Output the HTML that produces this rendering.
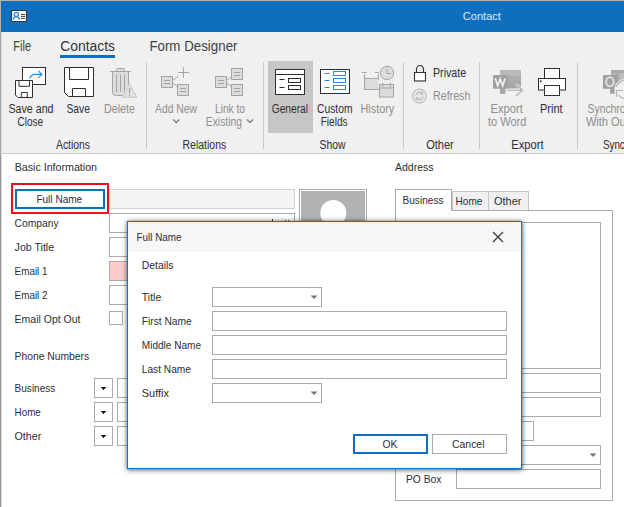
<!DOCTYPE html>
<html lang="en"><head><meta charset="utf-8"><title>Contact</title>
<style>
html,body{margin:0;padding:0;background:#fff;overflow:hidden}
body{width:624px;height:507px;font-family:"Liberation Sans",sans-serif}
svg{display:block;position:absolute;left:0;top:0}
text{font-family:"Liberation Sans",sans-serif;white-space:pre}
</style></head><body>
<svg width="624" height="507" viewBox="0 0 624 507">
<defs>
<filter id="sh" x="-10%" y="-10%" width="120%" height="125%"><feDropShadow dx="0.2" dy="0.4" stdDeviation="2.3" flood-color="#000" flood-opacity="0.6"/></filter>
<filter id="sh2" x="-10%" y="-10%" width="120%" height="125%"><feDropShadow dx="0" dy="1.5" stdDeviation="3" flood-color="#000" flood-opacity="0.2"/></filter>
</defs>
<rect x="0" y="0" width="624" height="507" fill="#fff" />
<rect x="0" y="0" width="624" height="32" fill="#106ebe" />
<rect x="0" y="0" width="624" height="1" fill="#b9b2a6" />
<rect x="0" y="32" width="624" height="121" fill="#f0f0f0" />
<rect x="0" y="153" width="624" height="1" fill="#c9c9c9" />
<rect x="0" y="0" width="1" height="32" fill="#b9b2a6" />
<rect x="0" y="32" width="1" height="122" fill="#a6a6a6" />
<rect x="1" y="32" width="1" height="122" fill="#dedede" />
<rect x="0" y="154" width="1" height="353" fill="#979797" />
<rect x="1" y="154" width="1" height="353" fill="#d9d9d9" />
<rect x="11.5" y="10.5" width="15" height="11" rx="0.8" fill="#fff" stroke="#3a3a3a" stroke-width="1.2"/>
<circle cx="16.3" cy="14.4" r="2.1" fill="none" stroke="#2b8ade" stroke-width="1.3"/>
<path d="M13.4 19.8 a2.95 3.1 0 0 1 5.9 0" fill="none" stroke="#2b8ade" stroke-width="1.3"/>
<line x1="21" y1="14.4" x2="25" y2="14.4" stroke="#3a3a3a" stroke-width="1" />
<line x1="21" y1="16.4" x2="25" y2="16.4" stroke="#3a3a3a" stroke-width="1" />
<line x1="21" y1="18.4" x2="25" y2="18.4" stroke="#3a3a3a" stroke-width="1" />
<text x="462.8" y="20" font-size="11" fill="#dce9f7" textLength="38.1" lengthAdjust="spacingAndGlyphs" >Contact</text>
<text x="13.3" y="51" font-size="14" fill="#404040" textLength="17.7" lengthAdjust="spacingAndGlyphs" >File</text>
<text x="60.3" y="51" font-size="14" fill="#333" textLength="54.7" lengthAdjust="spacingAndGlyphs" >Contacts</text>
<rect x="60" y="55" width="55" height="3" fill="#106ebe" />
<text x="149.4" y="51" font-size="14" fill="#404040" textLength="88.1" lengthAdjust="spacingAndGlyphs" >Form Designer</text>
<rect x="146" y="62" width="1" height="87" fill="#c8c8c8" />
<rect x="263" y="62" width="1" height="87" fill="#c8c8c8" />
<rect x="403" y="62" width="1" height="87" fill="#c8c8c8" />
<rect x="479" y="62" width="1" height="87" fill="#c8c8c8" />
<rect x="577" y="62" width="1" height="87" fill="#c8c8c8" />
<rect x="268" y="61" width="45" height="72" fill="#c6c6c6" />
<text x="8.5" y="113" font-size="12" fill="#2e2e33" textLength="45.0" lengthAdjust="spacingAndGlyphs" >Save and</text>
<text x="17.5" y="126" font-size="12" fill="#2e2e33" textLength="25.5" lengthAdjust="spacingAndGlyphs" >Close</text>
<text x="66.5" y="113" font-size="12" fill="#2e2e33" textLength="23.5" lengthAdjust="spacingAndGlyphs" >Save</text>
<text x="104" y="113" font-size="12" fill="#8e8e8e" textLength="31" lengthAdjust="spacingAndGlyphs" >Delete</text>
<text x="56" y="148.7" font-size="12" fill="#2e2e33" textLength="34" lengthAdjust="spacingAndGlyphs" >Actions</text>
<text x="155" y="113" font-size="12" fill="#8e8e8e" textLength="42" lengthAdjust="spacingAndGlyphs" >Add New</text>
<text x="215" y="113" font-size="12" fill="#8e8e8e" textLength="30" lengthAdjust="spacingAndGlyphs" >Link to</text>
<text x="205.75" y="126" font-size="12" fill="#8e8e8e" textLength="36.25" lengthAdjust="spacingAndGlyphs" >Existing</text>
<text x="182.5" y="148.7" font-size="12" fill="#2e2e33" textLength="43.75" lengthAdjust="spacingAndGlyphs" >Relations</text>
<text x="271.75" y="113" font-size="12" fill="#2e2e33" textLength="36.25" lengthAdjust="spacingAndGlyphs" >General</text>
<text x="317" y="113" font-size="12" fill="#2e2e33" textLength="35.5" lengthAdjust="spacingAndGlyphs" >Custom</text>
<text x="320.75" y="126" font-size="12" fill="#2e2e33" textLength="26.75" lengthAdjust="spacingAndGlyphs" >Fields</text>
<text x="360.5" y="113" font-size="12" fill="#8e8e8e" textLength="33.75" lengthAdjust="spacingAndGlyphs" >History</text>
<text x="319.5" y="148.7" font-size="12" fill="#2e2e33" textLength="26.0" lengthAdjust="spacingAndGlyphs" >Show</text>
<text x="433" y="77" font-size="12" fill="#2e2e33" textLength="33.2" lengthAdjust="spacingAndGlyphs" >Private</text>
<text x="433" y="100" font-size="12" fill="#8e8e8e" textLength="37.4" lengthAdjust="spacingAndGlyphs" >Refresh</text>
<text x="426.2" y="148.7" font-size="12" fill="#2e2e33" textLength="27.6" lengthAdjust="spacingAndGlyphs" >Other</text>
<text x="490.5" y="113" font-size="12" fill="#8e8e8e" textLength="32.3" lengthAdjust="spacingAndGlyphs" >Export</text>
<text x="488" y="126" font-size="12" fill="#8e8e8e" textLength="38.3" lengthAdjust="spacingAndGlyphs" >to Word</text>
<text x="540" y="113" font-size="12" fill="#2e2e33" textLength="22.6" lengthAdjust="spacingAndGlyphs" >Print</text>
<text x="511.3" y="148.7" font-size="12" fill="#2e2e33" textLength="32.3" lengthAdjust="spacingAndGlyphs" >Export</text>
<text x="587.6" y="113" font-size="12" fill="#8e8e8e" textLength="56.9" lengthAdjust="spacingAndGlyphs" >Synchronize</text>
<text x="585.9" y="126" font-size="12" fill="#8e8e8e" textLength="63.1" lengthAdjust="spacingAndGlyphs" >With Outlook</text>
<text x="602.9" y="148.7" font-size="12" fill="#2e2e33" textLength="70.1" lengthAdjust="spacingAndGlyphs" >Synchronization</text>
<path d="M173.3 119.6 l3 3 l3 -3" fill="none" stroke="#808080" stroke-width="1.4"/>
<path d="M247 119.4 l3 3 l3 -3" fill="none" stroke="#808080" stroke-width="1.4"/>
<rect x="22.5" y="67.5" width="23" height="17" fill="#fff" stroke="#2f2f2f"/>
<path d="M29.8 78.6 C30.6 75.6 32.4 74.4 35 74.4 L42 74.4 M38.4 71 L42 74.4 L38.4 77.8" fill="none" stroke="#2b8ade" stroke-width="1.1"/>
<path d="M15.5 80.5 H32.5 V97.5 H18 L15.5 95 Z" fill="#fff" stroke="#2f2f2f"/>
<path d="M19 80.5 V86.3 H29.5 V80.5 M21.3 97.5 V92.5 H27.3 V97.5" fill="none" stroke="#2f2f2f"/>
<path d="M64.5 67.5 H93.5 V96.5 H68.5 L64.5 92.5 Z" fill="#fff" stroke="#2f2f2f"/>
<path d="M69.5 67.5 V79.5 H88.5 V67.5 M72.5 96.5 V88.5 H85.5 V96.5" fill="none" stroke="#2f2f2f"/>
<path d="M112.5 71.5 H128.5 V92.5 a3 3 0 0 1 -3 3 H115.5 a3 3 0 0 1 -3 -3 Z" fill="#dcdcdc" stroke="#a4a4a4"/>
<line x1="110" y1="71.5" x2="131" y2="71.5" stroke="#a4a4a4" stroke-width="1" />
<path d="M116.5 71 V69.5 a1 1 0 0 1 1 -1 H123.5 a1 1 0 0 1 1 1 V71" fill="#dcdcdc" stroke="#a4a4a4"/>
<line x1="116.5" y1="74.5" x2="116.5" y2="92" stroke="#a4a4a4" stroke-width="1" />
<line x1="120.5" y1="74.5" x2="120.5" y2="92" stroke="#a4a4a4" stroke-width="1" />
<line x1="124.5" y1="74.5" x2="124.5" y2="92" stroke="#a4a4a4" stroke-width="1" />
<path d="M129.7 82.2 L137.8 98 H121.4 Z" fill="#ececec"/>
<path d="M129.7 83.6 L136.8 97.3 H122.5 Z" fill="#e2e2e2" stroke="#c2c2c2" stroke-width="0.8"/>
<line x1="129.6" y1="88" x2="129.6" y2="93.5" stroke="#9c9c9c" stroke-width="1.1" />
<line x1="129.6" y1="94.6" x2="129.6" y2="96.2" stroke="#9c9c9c" stroke-width="1.1" />
<rect x="161.5" y="76.5" width="11" height="11" fill="#dcdcdc" stroke="#a4a4a4"/>
<line x1="164" y1="80.5" x2="170" y2="80.5" stroke="#a4a4a4" stroke-width="1" />
<line x1="164" y1="83.5" x2="170" y2="83.5" stroke="#a4a4a4" stroke-width="1" />
<rect x="177.5" y="84.5" width="11" height="11" fill="#dcdcdc" stroke="#a4a4a4"/>
<line x1="180" y1="88.5" x2="186" y2="88.5" stroke="#a4a4a4" stroke-width="1" />
<line x1="180" y1="91.5" x2="186" y2="91.5" stroke="#a4a4a4" stroke-width="1" />
<line x1="172.5" y1="80.6" x2="178" y2="76.4" stroke="#a4a4a4" stroke-width="1" />
<line x1="172.5" y1="82.6" x2="177.5" y2="86.8" stroke="#a4a4a4" stroke-width="1" />
<line x1="183.4" y1="67.3" x2="183.4" y2="78" stroke="#a4a4a4" stroke-width="1" />
<line x1="178" y1="72.5" x2="189" y2="72.5" stroke="#a4a4a4" stroke-width="1" />
<rect x="215.5" y="76.5" width="11" height="11" fill="#dcdcdc" stroke="#a4a4a4"/>
<line x1="218" y1="80.5" x2="224" y2="80.5" stroke="#a4a4a4" stroke-width="1" />
<line x1="218" y1="83.5" x2="224" y2="83.5" stroke="#a4a4a4" stroke-width="1" />
<rect x="231.5" y="68.5" width="11" height="11" fill="#dcdcdc" stroke="#a4a4a4"/>
<line x1="234" y1="72.5" x2="240" y2="72.5" stroke="#a4a4a4" stroke-width="1" />
<line x1="234" y1="75.5" x2="240" y2="75.5" stroke="#a4a4a4" stroke-width="1" />
<rect x="231.5" y="84.5" width="11" height="11" fill="#dcdcdc" stroke="#a4a4a4"/>
<line x1="234" y1="88.5" x2="240" y2="88.5" stroke="#a4a4a4" stroke-width="1" />
<line x1="234" y1="91.5" x2="240" y2="91.5" stroke="#a4a4a4" stroke-width="1" />
<line x1="226.5" y1="80.6" x2="231.5" y2="76.6" stroke="#a4a4a4" stroke-width="1" />
<line x1="226.5" y1="82.8" x2="231.5" y2="87" stroke="#a4a4a4" stroke-width="1" />
<rect x="275.5" y="69.5" width="29" height="25" fill="#fff" stroke="#2f2f2f"/>
<line x1="275.5" y1="74.5" x2="304.5" y2="74.5" stroke="#2f2f2f" stroke-width="1" />
<line x1="279.5" y1="79.5" x2="284.5" y2="79.5" stroke="#2f2f2f" stroke-width="1" />
<line x1="279.5" y1="87.5" x2="284.5" y2="87.5" stroke="#2f2f2f" stroke-width="1" />
<rect x="288.5" y="78.5" width="12" height="4" fill="#fff" stroke="#2f2f2f"/>
<rect x="288.5" y="85.5" width="12" height="4" fill="#fff" stroke="#2f2f2f"/>
<rect x="320.5" y="69.5" width="29" height="24" fill="#fff" stroke="#2f2f2f"/>
<line x1="324.5" y1="73.5" x2="329.5" y2="73.5" stroke="#2b8ade" stroke-width="1" />
<line x1="324.5" y1="80.5" x2="329.5" y2="80.5" stroke="#2b8ade" stroke-width="1" />
<line x1="324.5" y1="87.5" x2="329.5" y2="87.5" stroke="#2b8ade" stroke-width="1" />
<rect x="333.5" y="71.5" width="12" height="4" fill="#fff" stroke="#2b8ade"/>
<rect x="333.5" y="78.5" width="12" height="4" fill="#fff" stroke="#2b8ade"/>
<rect x="333.5" y="85.5" width="12" height="4" fill="#fff" stroke="#2b8ade"/>
<path d="M364.5 78.5 H378.5 V89.5 H364.5 Z" fill="#dcdcdc" stroke="none"/>
<path d="M364.5 74 V89.5 H379 M364.5 78.5 H378 M378.5 74 V80" fill="none" stroke="#a4a4a4"/>
<line x1="362" y1="72.5" x2="366.5" y2="72.5" stroke="#a4a4a4" stroke-width="1" />
<line x1="375" y1="72.5" x2="379" y2="72.5" stroke="#a4a4a4" stroke-width="1" />
<circle cx="387" cy="73" r="6.7" fill="#dcdcdc" stroke="#a4a4a4"/>
<path d="M387 68.5 V73.5 H391" fill="none" stroke="#a4a4a4"/>
<rect x="379.5" y="84.5" width="14" height="12.5" fill="#dcdcdc" stroke="#a4a4a4"/>
<line x1="379.5" y1="88" x2="393.5" y2="88" stroke="#a4a4a4" stroke-width="1" />
<line x1="382.8" y1="82.5" x2="382.8" y2="87" stroke="#a4a4a4" stroke-width="1" />
<line x1="390.4" y1="82.5" x2="390.4" y2="87" stroke="#a4a4a4" stroke-width="1" />
<path d="M416.5 72.5 V69.5 a3.5 4 0 0 1 7 0 V72.5" fill="none" stroke="#2f2f2f" stroke-width="1.1"/>
<rect x="414.5" y="72.5" width="11" height="8.5" fill="#fff" stroke="#2f2f2f" stroke-width="1.1"/>
<circle cx="419.4" cy="96" r="7" fill="#e4e4e4" stroke="#b4b4b4"/>
<path d="M415.8 95.3 a3.7 3.7 0 0 1 6.6 -1.6 M423 96.7 a3.7 3.7 0 0 1 -6.6 1.6" fill="none" stroke="#b0b0b0"/>
<path d="M422.6 91.5 V94 H420.2 M416.2 100.5 V98 H418.6" fill="none" stroke="#b0b0b0"/>
<rect x="500" y="70" width="21" height="6" fill="#b9b9b9"/>
<rect x="500" y="76" width="21" height="6" fill="#adadad"/>
<rect x="500" y="82" width="21" height="6.5" fill="#a7a7a7"/>
<rect x="500" y="88" width="5.4" height="5.8" fill="#a4a4a4"/>
<rect x="493" y="75" width="14.5" height="13.8" rx="0.8" fill="#a0a0a0"/>
<path d="M495.3 78.2 L497.7 85.8 L500.2 79 L502.7 85.8 L505.1 78.2" fill="none" stroke="#efefef" stroke-width="1.7"/>
<path d="M516 83.7 L522.3 90.3" fill="none" stroke="#e6e6e6" stroke-width="2.6"/>
<path d="M507 90.3 H522 M516 83.7 L522.3 90.3 L516 96" fill="none" stroke="#a8a8a8" stroke-width="1.1"/>
<rect x="544.5" y="68.5" width="15" height="10.5" fill="#fff" stroke="#2f2f2f"/>
<rect x="538.5" y="78.5" width="27" height="11.5" fill="#fff" stroke="#2f2f2f"/>
<rect x="544.5" y="85.5" width="15" height="10" fill="#fff" stroke="#2f2f2f"/>
<rect x="540" y="80.5" width="1.6" height="1.6" fill="#2f2f2f"/>
<rect x="611" y="70" width="20" height="19" fill="#bcbcbc"/>
<rect x="611" y="70" width="9" height="19" fill="#b0b0b0"/>
<rect x="611" y="70" width="20" height="3" fill="#a8a8a8"/>
<rect x="610" y="88" width="5" height="5.8" fill="#a4a4a4"/>
<rect x="603" y="75" width="14.6" height="13.8" rx="0.8" fill="#a0a0a0"/>
<ellipse cx="609.9" cy="81.8" rx="3.8" ry="4.5" fill="none" stroke="#dcdcdc" stroke-width="2.1"/>
<circle cx="625" cy="89.5" r="9.6" fill="#f0f0f0" stroke="#f0f0f0" stroke-width="2"/>
<path d="M616.2 87.2 A9.3 9.3 0 0 1 625.5 80.4 M618 94.5 A9.3 9.3 0 0 0 624.5 98.6" fill="none" stroke="#adadad" stroke-width="1.1"/>
<path d="M622.8 90.4 H616.5 V96.7" fill="none" stroke="#b2b2b2"/>
<text x="14.7" y="171" font-size="11" fill="#2e2e33" textLength="82.3" lengthAdjust="spacingAndGlyphs" >Basic Information</text>
<rect x="12.0" y="184.0" width="96" height="29" fill="none" stroke="#e81123" stroke-width="2" />
<rect x="16.0" y="190.0" width="88" height="18" fill="#fff" stroke="#106ebe" stroke-width="2" />
<text x="36.4" y="203" font-size="11" fill="#2e2e33" textLength="45.8" lengthAdjust="spacingAndGlyphs" >Full Name</text>
<rect x="109.5" y="189.5" width="185" height="19" fill="#f5f5f5" stroke="#d2d2d2" stroke-width="1" />
<rect x="299.5" y="189.5" width="67" height="71" fill="#fff" stroke="#aaaaaa" stroke-width="1" />
<rect x="301" y="191" width="64" height="68" fill="#b2b2b2" />
<circle cx="333.3" cy="213" r="13" fill="#fff"/>
<text x="14.6" y="227" font-size="11" fill="#2e2e33" textLength="44.0" lengthAdjust="spacingAndGlyphs" >Company</text>
<text x="14.6" y="251" font-size="11" fill="#2e2e33" textLength="39.5" lengthAdjust="spacingAndGlyphs" >Job Title</text>
<text x="14.6" y="275" font-size="11" fill="#2e2e33" textLength="32.9" lengthAdjust="spacingAndGlyphs" >Email 1</text>
<text x="14.6" y="299" font-size="11" fill="#2e2e33" textLength="32.9" lengthAdjust="spacingAndGlyphs" >Email 2</text>
<text x="14.6" y="323" font-size="11" fill="#2e2e33" textLength="65.9" lengthAdjust="spacingAndGlyphs" >Email Opt Out</text>
<text x="14.6" y="360" font-size="11" fill="#2e2e33" textLength="74.6" lengthAdjust="spacingAndGlyphs" >Phone Numbers</text>
<text x="14.6" y="392" font-size="11" fill="#2e2e33" textLength="40.7" lengthAdjust="spacingAndGlyphs" >Business</text>
<text x="14.6" y="416" font-size="11" fill="#2e2e33" textLength="26.2" lengthAdjust="spacingAndGlyphs" >Home</text>
<text x="14.6" y="440" font-size="11" fill="#2e2e33" textLength="26.6" lengthAdjust="spacingAndGlyphs" >Other</text>
<rect x="109.5" y="213.5" width="185" height="19" fill="#fff" stroke="#ababab" stroke-width="1" />
<line x1="272.5" y1="219" x2="272.5" y2="225" stroke="#333" stroke-width="1" />
<line x1="270" y1="222.5" x2="275" y2="222.5" stroke="#333" stroke-width="1" />
<path d="M285 220 l4 4 m0 -4 l-4 4" stroke="#333" fill="none"/>
<rect x="109.5" y="237.5" width="185" height="19" fill="#fff" stroke="#ababab" stroke-width="1" />
<rect x="109.5" y="261.5" width="185" height="19" fill="#ffcccc" stroke="#ababab" stroke-width="1" />
<rect x="109.5" y="285.5" width="185" height="19" fill="#fff" stroke="#ababab" stroke-width="1" />
<rect x="109.5" y="311.5" width="13" height="13" fill="#fff" stroke="#ababab" stroke-width="1" />
<rect x="94.5" y="378.5" width="18" height="19" fill="#fff" stroke="#ababab" stroke-width="1" />
<path d="M100.5 387 h6 l-3 3.2 z" fill="#222"/>
<rect x="117.5" y="378.5" width="177" height="19" fill="#fff" stroke="#ababab" stroke-width="1" />
<rect x="94.5" y="402.5" width="18" height="19" fill="#fff" stroke="#ababab" stroke-width="1" />
<path d="M100.5 411 h6 l-3 3.2 z" fill="#222"/>
<rect x="117.5" y="402.5" width="177" height="19" fill="#fff" stroke="#ababab" stroke-width="1" />
<rect x="94.5" y="426.5" width="18" height="19" fill="#fff" stroke="#ababab" stroke-width="1" />
<path d="M100.5 435 h6 l-3 3.2 z" fill="#222"/>
<rect x="117.5" y="426.5" width="177" height="19" fill="#fff" stroke="#ababab" stroke-width="1" />
<text x="395" y="171" font-size="11" fill="#2e2e33" textLength="38.5" lengthAdjust="spacingAndGlyphs" >Address</text>
<rect x="452.5" y="191.5" width="36" height="19" fill="#f0f0f0" stroke="#c6c6c6" stroke-width="1" />
<rect x="488.5" y="191.5" width="40" height="19" fill="#f0f0f0" stroke="#c6c6c6" stroke-width="1" />
<rect x="395.5" y="210.5" width="217" height="290" fill="#fff" stroke="#ababab" stroke-width="1" />
<rect x="395.5" y="189.5" width="56" height="22" fill="#fff" stroke="#ababab" stroke-width="1" />
<rect x="396" y="210" width="55" height="3" fill="#fff" />
<rect x="451" y="211" width="2" height="2" fill="#fff" />
<rect x="451" y="210" width="2" height="1" fill="#ababab" />
<text x="402.5" y="204" font-size="11" fill="#2e2e33" textLength="41.0" lengthAdjust="spacingAndGlyphs" >Business</text>
<text x="455.5" y="205" font-size="11" fill="#2e2e33" textLength="27.0" lengthAdjust="spacingAndGlyphs" >Home</text>
<text x="494" y="205" font-size="11" fill="#2e2e33" textLength="27.5" lengthAdjust="spacingAndGlyphs" >Other</text>
<rect x="406.5" y="222.5" width="194" height="146" fill="#fff" stroke="#ababab" stroke-width="1" />
<rect x="406.5" y="373.5" width="194" height="19" fill="#fff" stroke="#ababab" stroke-width="1" />
<rect x="406.5" y="397.5" width="194" height="19" fill="#fff" stroke="#ababab" stroke-width="1" />
<rect x="406.5" y="421.5" width="127" height="19" fill="#fff" stroke="#ababab" stroke-width="1" />
<rect x="406.5" y="445.5" width="194" height="19" fill="#fff" stroke="#ababab" stroke-width="1" />
<path d="M589.5 453.5 h7 l-3.5 3.5 z" fill="#777"/>
<text x="406" y="483" font-size="11" fill="#2e2e33" textLength="35.5" lengthAdjust="spacingAndGlyphs" >PO Box</text>
<rect x="456.5" y="469.5" width="144" height="19" fill="#fff" stroke="#ababab" stroke-width="1" />
<rect x="127" y="221" width="395" height="248" fill="#fff" filter="url(#sh2)"/>
<rect x="127" y="221" width="395" height="248" fill="#fff" filter="url(#sh)"/>
<rect x="127.5" y="221.5" width="394" height="247" fill="#fff" stroke="#1a72c4" stroke-width="1" />
<rect x="128" y="222" width="393" height="30" fill="#f7f7f7" />
<text x="136.5" y="241" font-size="11" fill="#2e2e33" textLength="45.0" lengthAdjust="spacingAndGlyphs" >Full Name</text>
<path d="M493 232 l10 10 m0 -10 l-10 10" stroke="#333" stroke-width="1.1" fill="none"/>
<text x="141.7" y="269" font-size="11" fill="#2e2e33" textLength="31.8" lengthAdjust="spacingAndGlyphs" >Details</text>
<text x="141.8" y="301" font-size="11" fill="#2e2e33" textLength="19.5" lengthAdjust="spacingAndGlyphs" >Title</text>
<text x="141.8" y="325" font-size="11" fill="#2e2e33" textLength="49.9" lengthAdjust="spacingAndGlyphs" >First Name</text>
<text x="141.8" y="349" font-size="11" fill="#2e2e33" textLength="59.2" lengthAdjust="spacingAndGlyphs" >Middle Name</text>
<text x="141.8" y="373" font-size="11" fill="#2e2e33" textLength="49.1" lengthAdjust="spacingAndGlyphs" >Last Name</text>
<text x="141.8" y="397" font-size="11" fill="#2e2e33" textLength="27.2" lengthAdjust="spacingAndGlyphs" >Suffix</text>
<rect x="212.5" y="287.5" width="109" height="19" fill="#fff" stroke="#ababab" stroke-width="1" />
<path d="M310.5 295.5 h7 l-3.5 3.5 z" fill="#777"/>
<rect x="212.5" y="311.5" width="294" height="19" fill="#fff" stroke="#ababab" stroke-width="1" />
<rect x="212.5" y="335.5" width="294" height="19" fill="#fff" stroke="#ababab" stroke-width="1" />
<rect x="212.5" y="359.5" width="294" height="19" fill="#fff" stroke="#ababab" stroke-width="1" />
<rect x="212.5" y="383.5" width="109" height="19" fill="#fff" stroke="#ababab" stroke-width="1" />
<path d="M310.5 391.5 h7 l-3.5 3.5 z" fill="#777"/>
<rect x="354.0" y="435.0" width="73" height="18" fill="#fff" stroke="#106ebe" stroke-width="2" />
<text x="382.5" y="448" font-size="11" fill="#2e2e33" textLength="15.0" lengthAdjust="spacingAndGlyphs" >OK</text>
<rect x="432.5" y="434.5" width="74" height="19" fill="#fff" stroke="#ababab" stroke-width="1" />
<text x="452" y="448" font-size="11" fill="#2e2e33" textLength="32.5" lengthAdjust="spacingAndGlyphs" >Cancel</text>
</svg>
</body></html>
